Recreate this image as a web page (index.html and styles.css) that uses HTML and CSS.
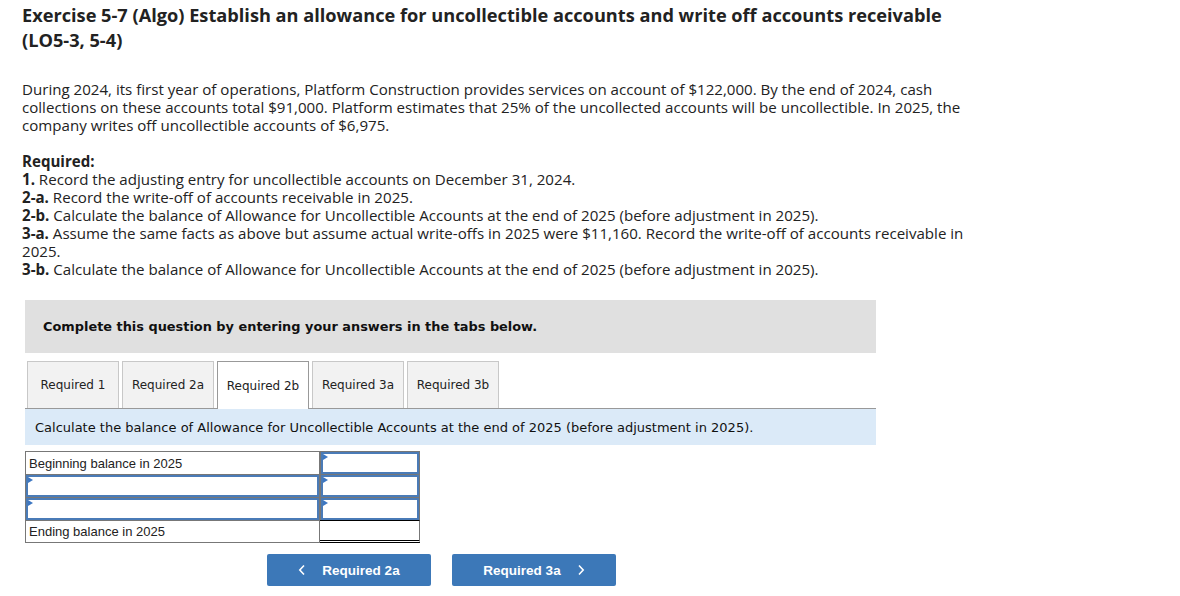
FILE: index.html
```html
<!DOCTYPE html>
<html>
<head>
<meta charset="utf-8">
<link rel="stylesheet" href="styles.css">
</head>
<body>
<div class="page">
  <h1 class="title">Exercise 5-7 (Algo) Establish an allowance for uncollectible accounts and write off accounts receivable (LO5-3, 5-4)</h1>
  <p class="para">During 2024, its first year of operations, Platform Construction provides services on account of $122,000. By the end of 2024, cash collections on these accounts total $91,000. Platform estimates that 25% of the uncollected accounts will be uncollectible. In 2025, the company writes off uncollectible accounts of $6,975.</p>
  <div class="req">
    <div><b>Required:</b></div>
    <div><b>1.</b> Record the adjusting entry for uncollectible accounts on December 31, 2024.</div>
    <div><b>2-a.</b> Record the write-off of accounts receivable in 2025.</div>
    <div><b>2-b.</b> Calculate the balance of Allowance for Uncollectible Accounts at the end of 2025 (before adjustment in 2025).</div>
    <div><b>3-a.</b> Assume the same facts as above but assume actual write-offs in 2025 were $11,160. Record the write-off of accounts receivable in 2025.</div>
    <div><b>3-b.</b> Calculate the balance of Allowance for Uncollectible Accounts at the end of 2025 (before adjustment in 2025).</div>
  </div>
  <div class="panel">
    <div class="banner">Complete this question by entering your answers in the tabs below.</div>
    <div class="tabs">
      <div class="tab">Required 1</div>
      <div class="tab">Required 2a</div>
      <div class="tab active">Required 2b</div>
      <div class="tab">Required 3a</div>
      <div class="tab">Required 3b</div>
    </div>
    <div class="prompt">Calculate the balance of Allowance for Uncollectible Accounts at the end of 2025 (before adjustment in 2025).</div>
    <div class="grid">
      <div class="label">Beginning balance in 2025</div>
      <div class="cell"><div class="inp"><span class="flag"></span></div></div>
      <div class="cell"><div class="inp"><span class="flag"></span></div></div>
      <div class="cell"><div class="inp"><span class="flag"></span></div></div>
      <div class="cell"><div class="inp"><span class="flag"></span></div></div>
      <div class="cell"><div class="inp"><span class="flag"></span></div></div>
      <div class="label">Ending balance in 2025</div>
      <div class="total"></div>
    </div>
    <div class="nav">
      <button class="btn"><svg class="chev" width="8" height="12" viewBox="0 0 8 12"><path d="M6 1.5 L1.8 6 L6 10.5" fill="none" stroke="#fff" stroke-width="1.6"/></svg>Required 2a</button>
      <button class="btn">Required 3a<svg class="chev right" width="8" height="12" viewBox="0 0 8 12"><path d="M2 1.5 L6.2 6 L2 10.5" fill="none" stroke="#fff" stroke-width="1.6"/></svg></button>
    </div>
  </div>
</div>
</body>
</html>
```
FILE: styles.css
```css
html, body { margin: 0; padding: 0; background: #fff; }
.page {
  padding: 3px 0 0 22px;
  font-family: "Open Sans", "Liberation Sans", sans-serif;
  color: #222;
}
.title {
  margin: 0;
  font-size: 18.2px;
  line-height: 25px;
  font-weight: 700;
  width: 940px;
  color: #222;
}
.para {
  margin: 27px 0 0 0;
  font-size: 15.1px;
  line-height: 18px;
  width: 945px;
}
.req {
  margin-top: 18px;
  font-size: 15.1px;
  line-height: 18px;
  width: 945px;
}
.req b { font-weight: 700; }
.panel { margin: 22px 0 0 3px; width: 851px; }
.banner {
  background: #e0e0e0;
  height: 53px;
  padding-left: 18px;
  display: flex;
  align-items: center;
  font-family: "DejaVu Sans", Verdana, sans-serif;
  font-weight: 700;
  font-size: 12.9px;
  color: #111;
}
.tabs {
  display: flex;
  gap: 3px;
  margin-top: 8px;
  padding-left: 2px;
  height: 47px;
  align-items: flex-end;
}
.tab {
  box-sizing: border-box;
  width: 92px;
  height: 47px;
  border: 1px solid #c8c8c8;
  border-bottom: none;
  background: #f2f2f2;
  display: flex;
  align-items: center;
  justify-content: center;
  font-family: "DejaVu Sans", Verdana, sans-serif;
  font-size: 12px;
  color: #222;
}
.tab.active { background: #fff; border-color: #999; height: 48px; margin-bottom: -1px; position: relative; z-index: 1; }
.prompt {
  border-top: 1px solid #999;
  background: #dbeaf8;
  height: 36px;
  padding-left: 10px;
  display: flex;
  align-items: center;
  font-family: "DejaVu Sans", Verdana, sans-serif;
  font-size: 13px;
  color: #111;
}
.grid {
  margin-top: 6px;
  display: grid;
  grid-template-columns: 295px 100px;
  grid-auto-rows: 23px;
  width: 395px;
  font-family: "Liberation Sans", Arial, sans-serif;
  font-size: 13px;
  color: #222;
}
.grid > div { box-sizing: border-box; }
.label {
  border: 1px solid #777;
  border-bottom: none;
  padding-left: 3px;
  display: flex;
  align-items: center;
}
.grid > div:nth-child(7) { border-bottom: 1px solid #777; }
.cell {
  border-top: 1px solid #777;
  border-left: 1px solid #777;
}
.grid > div:nth-child(2), .grid > div:nth-child(4), .grid > div:nth-child(6) { border-left: 1px solid #777; border-right: 1px solid #777; }
.grid > div:nth-child(3), .grid > div:nth-child(5) { border-right: 1px solid #777; }
.inp {
  box-sizing: border-box;
  height: 22px;
  border: 2px solid #4a7bb7;
  position: relative;
  background: #fff;
}
.flag {
  position: absolute;
  left: 0; top: 0;
  width: 0; height: 0;
  border-top: 3px solid transparent;
  border-bottom: 3px solid transparent;
  border-left: 5px solid #3d77c2;
}
.total {
  border-top: 1px solid #000;
  border-right: 1px solid #777;
  border-bottom: 3px double #000;
}
.nav {
  display: flex;
  gap: 21px;
  margin: 11px 0 0 242px;
}
.btn {
  width: 164px;
  height: 32px;
  background: #3c78b8;
  border: none;
  border-radius: 2px;
  color: #fff;
  font-family: "Liberation Sans", Arial, sans-serif;
  font-weight: 700;
  font-size: 13.5px;
  display: flex;
  align-items: center;
  justify-content: center;
  padding: 0;
}
.chev { margin-right: 16px; }
.chev.right { margin-right: 0; margin-left: 16px; }
```
